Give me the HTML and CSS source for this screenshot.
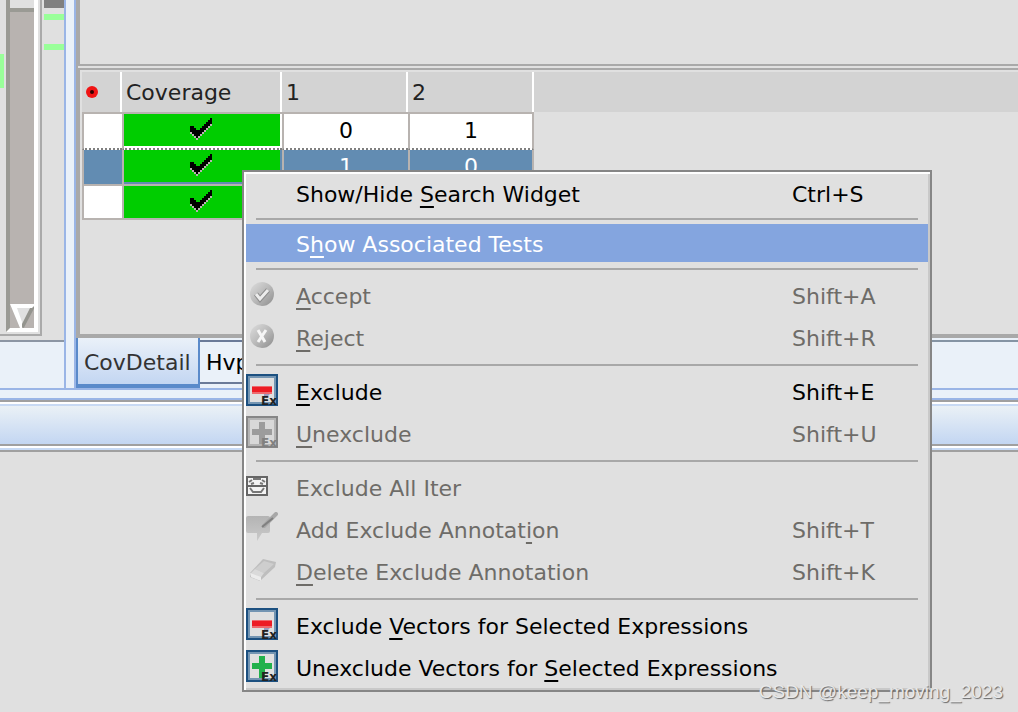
FILE: index.html
```html
<!DOCTYPE html>
<html lang="en">
<head>
    <meta charset="utf-8">
    <title>CovDetail</title>
    <meta name="viewport" content="width=device-width, initial-scale=1.0">
    <link rel="stylesheet" href="styles.css">
</head>
<body>
    <!-- shared icon shapes -->
    <svg class="defs" width="0" height="0" aria-hidden="true">
        <defs>
            <linearGradient id="ball" x1="0" y1="0" x2="1" y2="1">
                <stop offset="0" stop-color="#dedede"/>
                <stop offset="0.5" stop-color="#bababa"/>
                <stop offset="1" stop-color="#8c8c8c"/>
            </linearGradient>
            <linearGradient id="bubble" x1="0" y1="0" x2="0" y2="1">
                <stop offset="0" stop-color="#b4b4b4"/>
                <stop offset="1" stop-color="#cacaca"/>
            </linearGradient>
            <path id="tick" d="M10 0h1v3h-1v1h-1v1h-1v1h-1v1h-1v1h-1v1h-1v1h-1v-1h-1v-1h-1v-1h-1v-3h2v1h1v1h2v-1h1v-1h1v-1h1v-1h1v-1h1z"/>
            <symbol id="check" viewBox="0 0 11 11">
                <use href="#tick" y="1" fill="#b8b3b0"/>
                <use href="#tick" fill="#000"/>
            </symbol>
            <symbol id="exclude" viewBox="0 0 32 32">
                <rect x="1" y="1" width="30" height="30" fill="#e0e0e0" stroke="#1c5080" stroke-width="2"/>
                <rect x="3" y="3" width="26" height="26" fill="none" stroke="#7495b2" stroke-width="2"/>
                <rect x="6" y="12" width="20" height="8" fill="#ee6a6e"/>
                <rect x="6" y="13" width="20" height="5" fill="#ed1c24"/>
                <path d="M18 20h6l-2 2h-4z" fill="#9a9cc0"/>
                <text x="15" y="31" class="ex">Ex</text>
            </symbol>
            <symbol id="unexclude" viewBox="0 0 32 32">
                <rect x="1" y="1" width="30" height="30" fill="#e0e0e0" stroke="#1c5080" stroke-width="2"/>
                <rect x="3" y="3" width="26" height="26" fill="none" stroke="#7495b2" stroke-width="2"/>
                <path d="M13 6h6v7h7v6h-7v9h-6v-9h-7v-6h7z" fill="#22b14c"/>
                <text x="15" y="31" class="ex">Ex</text>
            </symbol>
            <symbol id="unexclude-off" viewBox="0 0 32 32">
                <rect x="1" y="1" width="30" height="30" fill="#d8d8d8" stroke="#868686" stroke-width="2"/>
                <rect x="3" y="3" width="26" height="26" fill="none" stroke="#b4b4b4" stroke-width="2"/>
                <path d="M13 6h6v7h7v6h-7v9h-6v-9h-7v-6h7z" fill="#9c9c9c"/>
                <text x="15" y="31" class="ex ex-off">Ex</text>
            </symbol>
        </defs>
    </svg>

    <main class="workspace">
        <section class="overview">
            <div class="overview-body">
                <div class="edge"><span class="edge-mark"></span></div>
                <div class="scrollbar">
                    <div class="thumb"></div>
                    <svg class="arrow" width="24" height="24" viewBox="0 0 24 24">
                        <rect width="24" height="24" fill="#b8b3b0"/>
                        <path d="M23 2L12 23" stroke="#94948e" stroke-width="4"/>
                        <path d="M6 4h14l-8 16z" fill="#e0e0e0"/>
                        <path d="M0 0h24v2l-2 2H7l5 14v6h-2z" fill="#fff"/>
                    </svg>
                </div>
                <div class="marks">
                    <span class="mark-view"></span>
                    <span class="mark"></span>
                    <span class="mark"></span>
                </div>
            </div>
            <div class="overview-foot"></div>
        </section>

        <div class="splitter"></div>

        <section class="detail">
            <div class="detail-view">
                <div class="source"></div>
                <div class="split-bar"></div>
                <table class="coverage">
                    <colgroup>
                        <col class="col-flag">
                        <col class="col-cov">
                        <col class="col-term">
                        <col class="col-term">
                        <col>
                    </colgroup>
                    <thead>
                        <tr>
                            <th>
                                <svg width="12" height="12" viewBox="0 0 12 12"><circle cx="6" cy="6" r="6" fill="#f01414"/><circle cx="6" cy="6" r="2" fill="#300"/></svg>
                            </th>
                            <th>Coverage</th>
                            <th>1</th>
                            <th>2</th>
                            <th class="rest"></th>
                        </tr>
                    </thead>
                    <tbody>
                        <tr class="first">
                            <td></td>
                            <td><div class="covered"><svg width="22" height="22"><use href="#check"/></svg></div></td>
                            <td>0</td>
                            <td>1</td>
                            <td class="rest"></td>
                        </tr>
                        <tr class="selected">
                            <td></td>
                            <td><div class="covered"><svg width="22" height="22"><use href="#check"/></svg></div></td>
                            <td>1</td>
                            <td>0</td>
                            <td class="rest"></td>
                        </tr>
                        <tr>
                            <td></td>
                            <td><div class="covered"><svg width="22" height="22"><use href="#check"/></svg></div></td>
                            <td></td>
                            <td></td>
                            <td class="rest"></td>
                        </tr>
                    </tbody>
                </table>
            </div>
            <div class="tabs" role="tablist">
                <button class="tab active" role="tab" aria-selected="true">CovDetail</button>
                <button class="tab" role="tab" aria-selected="false">Hvp</button>
                <div class="tabs-rest"></div>
            </div>
        </section>
    </main>

    <div class="dock-gap"></div>
    <div class="dock-title"></div>

    <div class="menu" role="menu">
        <button class="item short" role="menuitem">
            <span class="icon"></span>
            <span class="label">Show/Hide <u>S</u>earch Widget</span>
            <span class="key">Ctrl+S</span>
        </button>
        <hr>
        <button class="item short current" role="menuitem">
            <span class="icon"></span>
            <span class="label">S<u>h</u>ow Associated Tests</span>
        </button>
        <hr>
        <button class="item" role="menuitem" disabled>
            <svg class="icon" viewBox="0 0 32 32">
                <circle cx="16" cy="16" r="12" fill="url(#ball)"/>
                <path d="M10 16l4 5 8-9" fill="none" stroke="#8c8c8c" stroke-width="5"/>
                <path d="M10 16l4 5 8-9" fill="none" stroke="#ececec" stroke-width="3"/>
            </svg>
            <span class="label"><u>A</u>ccept</span>
            <span class="key">Shift+A</span>
        </button>
        <button class="item" role="menuitem" disabled>
            <svg class="icon" viewBox="0 0 32 32">
                <circle cx="16" cy="16" r="12" fill="url(#ball)"/>
                <path d="M12 10l7 12M20 10l-8 12" fill="none" stroke="#f6f6f6" stroke-width="3"/>
            </svg>
            <span class="label"><u>R</u>eject</span>
            <span class="key">Shift+R</span>
        </button>
        <hr>
        <button class="item" role="menuitem">
            <svg class="icon"><use href="#exclude"/></svg>
            <span class="label"><u>E</u>xclude</span>
            <span class="key">Shift+E</span>
        </button>
        <button class="item" role="menuitem" disabled>
            <svg class="icon"><use href="#unexclude-off"/></svg>
            <span class="label"><u>U</u>nexclude</span>
            <span class="key">Shift+U</span>
        </button>
        <hr>
        <button class="item" role="menuitem" disabled>
            <svg class="icon" viewBox="0 0 32 32">
                <rect x="1" y="7" width="20" height="18" fill="#f4f4f4" stroke="#666" stroke-width="2"/>
                <path d="M2 16h18" stroke="#666" stroke-width="2"/>
                <path d="M7 9h8M3 12l3-2M19 12l-3-2M5 14l3-1M17 14l-3-1M4 18l3 4h8l3-4" fill="none" stroke="#777" stroke-width="2"/>
            </svg>
            <span class="label">Exclude All Iter</span>
        </button>
        <button class="item" role="menuitem" disabled>
            <svg class="icon" viewBox="0 0 32 32">
                <path d="M0 6q0-2 2-2h20q2 0 2 2v13q0 2-2 2h-6l-5 8v-8H2q-2 0-2-2z" fill="url(#bubble)"/>
                <path d="M30 2L18 14" stroke="#a8a8a8" stroke-width="4" stroke-linecap="round"/>
                <path d="M27 6L16 15" stroke="#808080" stroke-width="2"/>
            </svg>
            <span class="label">Add Exclude Annotat<u>i</u>on</span>
            <span class="key">Shift+T</span>
        </button>
        <button class="item" role="menuitem" disabled>
            <svg class="icon" viewBox="0 0 32 32">
                <path d="M4 19L17 5l13 3-1 5-15 14-10-4z" fill="#bebebe"/>
                <path d="M9 15L18 7l10 3-10 9z" fill="#cecece"/>
                <path d="M5 19l4-4 9 4-5 7-8-3z" fill="#dadada"/>
                <path d="M4 19l11 4v4l-10-4z" fill="#ececec"/>
            </svg>
            <span class="label"><u>D</u>elete Exclude Annotation</span>
            <span class="key">Shift+K</span>
        </button>
        <hr>
        <button class="item" role="menuitem">
            <svg class="icon"><use href="#exclude"/></svg>
            <span class="label">Exclude <u>V</u>ectors for Selected Expressions</span>
        </button>
        <button class="item" role="menuitem">
            <svg class="icon"><use href="#unexclude"/></svg>
            <span class="label">Unexclude Vectors for <u>S</u>elected Expressions</span>
        </button>
    </div>

    <div class="watermark">CSDN @keep_moving_2023</div>
</body>
</html>
```
FILE: styles.css
```css
* {
    box-sizing: border-box;
}

body {
    margin: 0;
    min-height: 100vh;
    position: relative;
    overflow: hidden;
    background-color: #e0e0e0;
    font-family: "DejaVu Sans", Verdana, sans-serif;
    font-size: 22px;
    color: #000;
}

.defs {
    position: absolute;
}

button {
    font: inherit;
    color: inherit;
    border: 0;
    border-radius: 0;
    margin: 0;
    padding: 0;
    background: none;
    text-align: left;
}

.workspace {
    display: flex;
    height: 390px;
    border-bottom: 2px solid #9ab5e6;
}

/* left: overview strip with its scrollbar */
.overview {
    display: flex;
    flex-direction: column;
    width: 64px;
}

.overview-body {
    display: flex;
    height: 338px;
    padding-bottom: 2px;
}

.edge {
    width: 6px;
    padding-top: 54px;
    border-bottom: 2px solid #aaa;
}

.edge-mark {
    display: block;
    width: 4px;
    height: 34px;
    background-color: #99ff99;
}

.scrollbar {
    display: flex;
    flex-direction: column;
    width: 36px;
    border-right: 2px solid #aaa;
    border-bottom: 2px solid #aaa;
    padding: 0 2px 2px 0;
}

.thumb {
    flex: 1;
    border-left: 4px solid #9a9a94;
    border-right: 4px solid #fff;
    background: linear-gradient(#e0e0e0 8px, #9a9a94 8px, #9a9a94 12px, #b8b3b0 12px);
}

.arrow {
    box-sizing: content-box;
    border-left: 4px solid #9a9a94;
    border-right: 4px solid #fff;
    border-bottom: 4px solid #fff;
}

.marks {
    flex: 1;
    padding-left: 2px;
}

.mark-view,
.mark {
    display: block;
    height: 6px;
    background-color: #99ff99;
    margin-bottom: 24px;
}

.mark-view {
    height: 8px;
    background-color: #808080;
    margin-bottom: 6px;
}

.overview-foot {
    flex: 1;
    border-top: 2px solid #8c96a4;
    margin-top: 2px;
    background-color: #eaf1f9;
}

.splitter {
    width: 12px;
    border: solid #9ab5e6;
    border-width: 0 2px;
    background-color: #eaf1f9;
}

/* right: detail pane */
.detail {
    display: flex;
    flex-direction: column;
    flex: 1;
}

.detail-view {
    height: 338px;
    border-left: 4px solid #a9a9a9;
    border-bottom: 4px solid #a9a9a9;
}

.source {
    height: 64px;
}

.split-bar {
    height: 6px;
    margin-left: -2px;
    border: solid #a9a9a9;
    border-width: 2px 0;
    background-color: #e0e0e0;
}

.coverage {
    width: 100%;
    table-layout: fixed;
    border-spacing: 0;
    padding: 2px 0 0 2px;
}

.col-flag {
    width: 40px;
}

.col-cov {
    width: 160px;
}

.col-term {
    width: 126px;
}

.coverage th {
    height: 40px;
    padding: 2px 4px 0;
    border-right: 2px solid #fff;
    background-color: #d3d3d3;
    color: #222;
    font-weight: normal;
    text-align: left;
    line-height: 32px;
}

.coverage th:first-child {
    padding-top: 0;
}

.coverage th svg {
    display: block;
}

.coverage td {
    height: 34px;
    padding: 0;
    border: 0 solid #b8b3b0;
    border-left-width: 2px;
    border-bottom-width: 2px;
    background-color: #fff;
    text-align: center;
    vertical-align: top;
    line-height: 34px;
}

.coverage td:nth-child(4) {
    border-right-width: 2px;
}

.coverage .first td {
    height: 38px;
    border-top-width: 2px;
    border-bottom: 2px dotted #808080;
}

.coverage .selected td {
    height: 36px;
    background-color: #628cb2;
    color: #fff;
}

.coverage th.rest,
.coverage td.rest,
.coverage .first td.rest {
    border: 0;
}

.coverage td.rest,
.coverage .selected td.rest {
    background: none;
}

.covered {
    display: flex;
    justify-content: center;
    height: 32px;
    margin-right: 2px;
    padding: 4px 2px 0 0;
    background-color: #00cd00;
}

.tabs {
    display: flex;
    flex: 1;
    background-color: #eaf1f9;
}

.tab {
    margin: 2px 0 4px;
    padding: 0 6px;
    border: solid #6a7a98;
    border-width: 2px 0;
}

.tab.active {
    width: 124px;
    margin: 0;
    padding-top: 2px;
    border: solid #5a8aca;
    border-width: 0 2px 4px;
    background: linear-gradient(#eaf1f9, #c3d6f2);
    color: #333;
}

.tabs-rest {
    flex: 1;
    margin-top: 2px;
    border-top: 2px solid #8594a4;
}

.dock-gap {
    height: 10px;
    border-bottom: 2px solid #9ab5e6;
    background-color: #eaf1f9;
}

.dock-title {
    height: 52px;
    border: solid #a0a0a0;
    border-width: 2px 0;
    background: linear-gradient(#fff 2px, #c8daf4 2px, #c8daf4 4px, #eaf1f6 4px, #c3d6f2 42px, #a0a0a0 42px, #a0a0a0 44px, #fff 44px, #fff 46px, #c8daf4 46px);
}

/* context menu */
.menu {
    position: absolute;
    left: 242px;
    top: 170px;
    width: 690px;
    border: 2px solid #868686;
    background-color: #e0e0e0;
    box-shadow: inset 2px 2px #fff, inset -2px -2px #c9c9c9;
    padding: 2px;
}

.menu hr {
    margin: 6px 10px 4px;
    border: 0;
    border-top: 2px solid #a8a8a8;
}

.item {
    display: flex;
    width: 100%;
    height: 42px;
    line-height: 45px;
}

.item.short {
    height: 38px;
    line-height: 41px;
}

.item.current {
    background-color: #84a5df;
    color: #fff;
}

.item:disabled {
    color: #6e6c68;
}

.icon {
    width: 32px;
    height: 32px;
    margin: 4px 18px 0 0;
}

.label {
    flex: 1;
}

.key {
    width: 136px;
}

.item u {
    text-decoration-thickness: 2px;
    text-underline-offset: 4px;
    text-decoration-skip-ink: none;
}

.ex {
    font-size: 12px;
    font-weight: bold;
    fill: #222;
}

.ex-off {
    fill: #808080;
}

.watermark {
    position: absolute;
    right: 15px;
    bottom: 8px;
    font-family: "Liberation Sans", Arial, sans-serif;
    font-size: 19px;
    line-height: 24px;
    color: #e8e8e8;
    text-shadow: 1px 1px 1px #666;
}
```
